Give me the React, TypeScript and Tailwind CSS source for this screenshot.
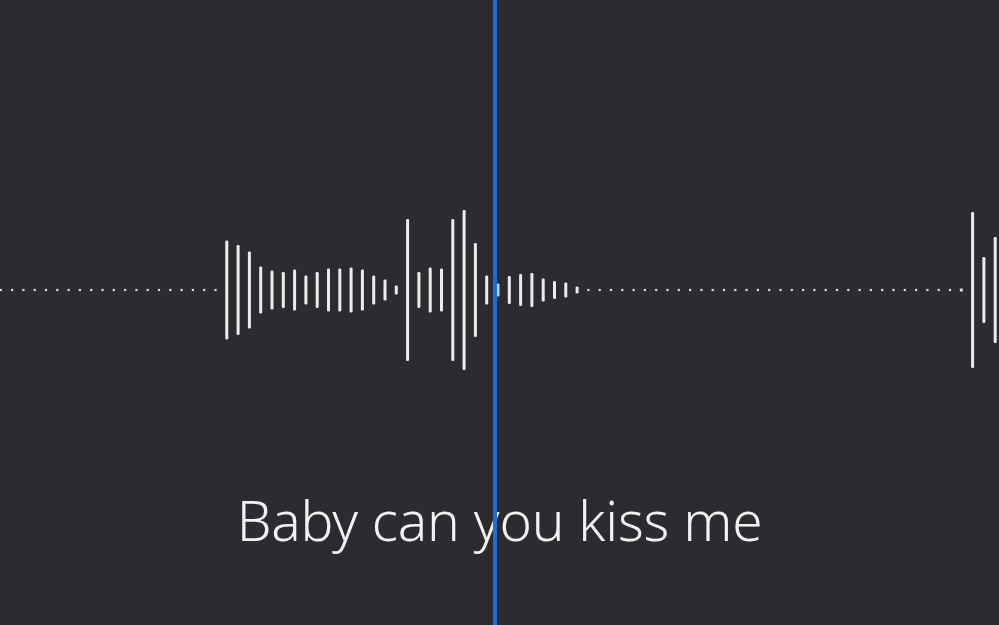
import { FC } from 'react';

// hauteurs des barres par index (les autres sont des points)
const bars: Record<number, number> = {
  20: 99, 21: 90, 22: 77, 23: 47, 24: 39, 25: 36, 26: 41, 27: 29, 28: 36, 29: 43,
  30: 43, 31: 45, 32: 41, 33: 29, 34: 21, 35: 9, 36: 142, 37: 36, 38: 45, 39: 43,
  40: 142, 41: 160, 42: 94, 43: 29, 44: 13, 45: 28, 46: 32, 47: 34, 48: 23, 49: 18,
  50: 15, 51: 7, 86: 156, 87: 66, 88: 106,
};

const STEP = 11.3;
const MID = 290;

const Waveform: FC = () => {
  const items = [];
  for (let i = 0; i < 90; i++) {
    const cx = 0.8 + i * STEP;
    const h = bars[i];
    if (h) {
      items.push(
        <rect
          key={i}
          x={cx - 1.5}
          y={MID - h / 2}
          width={3}
          height={h}
          rx={1.2}
          fill={i === 44 ? '#a9d3f5' : '#ececec'}
        />
      );
    } else {
      const big = i === 85;
      items.push(
        <rect
          key={i}
          x={cx - (big ? 1.5 : 1.1)}
          y={MID - (big ? 1.5 : 1.1)}
          width={big ? 3 : 2.2}
          height={big ? 3 : 2.2}
          fill="#dadada"
        />
      );
    }
  }
  return (
    <svg width={999} height={625} viewBox="0 0 999 625" className="block">
      {items}
    </svg>
  );
};

export default function App() {
  return (
    <div className="relative w-[999px] h-[625px] overflow-hidden bg-[#2c2b30]">
      <div className="absolute inset-0">
        <Waveform />
      </div>
      <div className="absolute left-0 right-0 top-[480px] flex justify-center">
        <p className="text-[#f2f2f2] text-[55px] leading-[80px] font-light tracking-[-0.2px] font-['Noto_Sans',sans-serif]">
          Baby can you kiss me
        </p>
      </div>
      <div className="absolute top-0 bottom-0 left-[493px] w-[4px] bg-[#1f6fd1]" />
    </div>
  );
}
